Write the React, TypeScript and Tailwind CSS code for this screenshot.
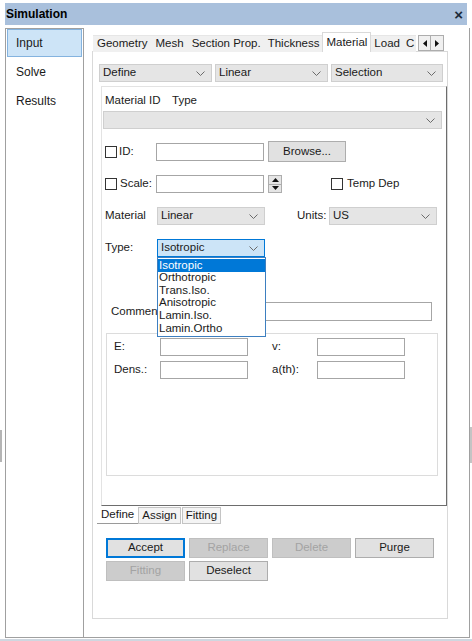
import React from "react";

const Chevron = () => (
  <svg width="9" height="5" viewBox="0 0 9 5" className="shrink-0">
    <path d="M0.5 0.5L4.5 4.5L8.5 0.5" fill="none" stroke="#6b6b6b" strokeWidth="1" />
  </svg>
);

const Tri = ({ dir }: { dir: "l" | "r" | "u" | "d" }) => {
  const d =
    dir === "l" ? "M4 0L0 3.5L4 7Z" : dir === "r" ? "M0 0L4 3.5L0 7Z" : dir === "u" ? "M0 4L3.5 0L7 4Z" : "M0 0L3.5 4L7 0Z";
  const horiz = dir === "l" || dir === "r";
  return (
    <svg width={horiz ? 4 : 7} height={horiz ? 7 : 4} viewBox={horiz ? "0 0 4 7" : "0 0 7 4"}>
      <path d={d} fill="#111111" />
    </svg>
  );
};

function Combo({ value, w, active }: { value?: string; w: string; active?: boolean }) {
  return (
    <div
      className={`flex h-[18px] shrink-0 items-center justify-between border pl-[3px] pr-[6px] ${w} ${
        active ? "border-[#0078d7] bg-[#cce4f7]" : "border-[#cfcfcf] bg-[#e5e5e5]"
      }`}
    >
      <span>{value}</span>
      <Chevron />
    </div>
  );
}

const Field = ({ w }: { w: string }) => (
  <div className={`h-[18px] shrink-0 border border-[#a6a6a6] bg-white ${w}`} />
);

const Check = () => <span className="h-[12px] w-[12px] shrink-0 border border-[#333333] bg-white" />;

function Btn({ label, disabled, focused }: { label: string; disabled?: boolean; focused?: boolean }) {
  return (
    <div
      className={`flex h-[20px] w-[79px] items-center justify-center ${
        disabled
          ? "border border-[#bfbfbf] bg-[#cccccc] text-[#a3a3a3]"
          : focused
          ? "border-2 border-[#0078d7] bg-[#e1e1e1]"
          : "border border-[#adadad] bg-[#e1e1e1]"
      }`}
    >
      {label}
    </div>
  );
}

const TABS = ["Geometry", "Mesh", "Section Prop.", "Thickness", "Material", "Load", "C"];
const TYPES = ["Isotropic", "Orthotropic", "Trans.Iso.", "Anisotropic", "Lamin.Iso.", "Lamin.Ortho"];

export default function App() {
  return (
    <div className="relative h-[641px] w-[472px] overflow-hidden bg-white pt-[3px] font-['Liberation_Sans',Arial,sans-serif] text-[11.5px] text-[#1a1a1a]">
      {/* title bar */}
      <div className="mx-[5px] flex h-[22px] items-center justify-between bg-[#a9c0dc] pl-[1px] pr-[4px]">
        <span className="text-[12px] font-bold text-black">Simulation</span>
        <span className="text-[15px] font-bold leading-none text-[#1a2a3a]">×</span>
      </div>

      <div className="mx-[5px] mt-[3px] flex h-[610px]">
        {/* left nav */}
        <div className="flex w-[79px] shrink-0 flex-col border border-[#a0a0a0] text-[12px]">
          <div className="mx-[1px] flex h-[28px] items-center border border-[#84b3df] bg-[#cde4f7] pl-[8px]">Input</div>
          <div className="flex h-[30px] items-center pl-[10px]">Solve</div>
          <div className="flex h-[28px] items-center pl-[10px]">Results</div>
        </div>

        {/* right area */}
        <div className="flex flex-1 flex-col border-b border-r border-[#a0a0a0] pb-[18px] pl-[8px] pr-[21px] pt-[5px]">
          {/* top tabs */}
          <div className="relative z-10 flex h-[19px] w-[356px] items-end">
            <div className="flex h-[20px] min-w-0 flex-1 items-end overflow-hidden pl-[1px]">
              {TABS.map((t) =>
                t === "Material" ? (
                  <div
                    key={t}
                    className="flex h-[20px] shrink-0 items-center whitespace-nowrap border border-b-0 border-[#d9d9d9] bg-white px-[3px]"
                  >
                    {t}
                  </div>
                ) : (
                  <div
                    key={t}
                    className={`flex h-[17px] shrink-0 items-center whitespace-nowrap border-t border-[#e6e6e6] bg-[#f0f0f0] ${
                      t === "C" ? "pl-[3px] pr-[2px]" : t === "Thickness" || t === "Load" ? "px-[3px]" : "px-[4px]"
                    }`}
                  >
                    {t}
                  </div>
                )
              )}
            </div>
            <div className="mb-[1px] mr-[4px] flex h-[16px] shrink-0">
              <div className="flex w-[13px] items-center justify-center border border-[#adadad] bg-[#f0f0f0]">
                <Tri dir="l" />
              </div>
              <div className="flex w-[13px] items-center justify-center border border-l-0 border-[#adadad] bg-[#f0f0f0]">
                <Tri dir="r" />
              </div>
            </div>
          </div>

          {/* tab page */}
          <div className="-mt-px flex w-[356px] flex-1 flex-col border border-[#d9d9d9] bg-white pt-[12px]">
            <div className="ml-[6px] flex gap-[3px]">
              <Combo value="Define" w="w-[113px]" />
              <Combo value="Linear" w="w-[113px]" />
              <Combo value="Selection" w="w-[112px]" />
            </div>

            {/* material frame */}
            <div className="relative ml-[8px] mt-[4px] flex h-[420px] flex-col border border-b-[#6d6d6d] border-l-[#e3e3e3] border-r-[#6d6d6d] border-t-[#e3e3e3] pl-[3px]">
              <div className="mt-[7px] flex h-[14px] items-center">
                <span className="w-[67px]">Material ID</span>
                <span>Type</span>
              </div>
              <div className="-ml-[3px] mt-[3px] pl-px">
                <Combo w="w-[339px]" />
              </div>

              <div className="mt-[12px] flex h-[21px] items-center">
                <div className="flex w-[51px] items-center gap-[2px]">
                  <Check />
                  <span>ID:</span>
                </div>
                <Field w="w-[108px]" />
                <div className="ml-[4px] flex h-[21px] w-[78px] items-center justify-center border border-[#adadad] bg-[#e1e1e1]">
                  Browse...
                </div>
              </div>

              <div className="mt-[13px] flex h-[18px] items-center">
                <div className="flex w-[51px] items-center gap-[3px]">
                  <Check />
                  <span>Scale:</span>
                </div>
                <Field w="w-[108px]" />
                <div className="ml-[4px] flex h-[18px] w-[14px] flex-col border border-[#adadad] bg-[#e5e5e5]">
                  <div className="flex flex-1 items-center justify-center border-b border-[#adadad]">
                    <Tri dir="u" />
                  </div>
                  <div className="flex flex-1 items-center justify-center">
                    <Tri dir="d" />
                  </div>
                </div>
                <div className="ml-[49px] flex items-center gap-[4px]">
                  <Check />
                  <span>Temp Dep</span>
                </div>
              </div>

              <div className="mt-[14px] flex h-[18px] items-center">
                <span className="w-[52px]">Material</span>
                <Combo value="Linear" w="w-[108px]" />
                <span className="ml-[32px] w-[32px]">Units:</span>
                <Combo value="US" w="w-[108px]" />
              </div>

              <div className="mt-[14px] flex h-[18px] items-center">
                <span className="w-[52px]">Type:</span>
                <Combo value="Isotropic" w="w-[108px]" active />
              </div>

              <div className="mt-[45px] flex h-[19px] items-center">
                <span className="ml-[6px] w-[59px]">Comment</span>
                <div className="h-[19px] w-[262px] border border-[#a6a6a6] bg-white" />
              </div>

              {/* properties box */}
              <div className="ml-px mt-[12px] flex h-[143px] w-[332px] flex-col border border-[#dcdcdc] pl-[7px] pt-[4px]">
                <div className="flex h-[18px] items-center">
                  <span className="w-[46px]">E:</span>
                  <Field w="w-[88px]" />
                  <span className="ml-[24px] w-[45px]">v:</span>
                  <Field w="w-[88px]" />
                </div>
                <div className="mt-[5px] flex h-[18px] items-center">
                  <span className="w-[46px]">Dens.:</span>
                  <Field w="w-[88px]" />
                  <span className="ml-[24px] w-[45px]">a(th):</span>
                  <Field w="w-[88px]" />
                </div>
              </div>

              {/* open type list */}
              <div className="absolute left-[55px] top-[170px] z-20 flex w-[109px] flex-col border border-[#3d7fc0] bg-white py-px text-[11.5px]">
                {TYPES.map((t, i) => (
                  <div
                    key={t}
                    className={`flex h-[12.6px] items-center pl-[1px] ${i === 0 ? "bg-[#0078d7] text-white" : ""}`}
                  >
                    {t}
                  </div>
                ))}
              </div>
            </div>

            {/* bottom tabs */}
            <div className="ml-[4px] mt-[1px] flex h-[17px]">
              <div className="flex items-center border-b border-[#9a9a9a] bg-white px-[4px]">Define</div>
              <div className="flex items-center border border-[#c4c4c4] bg-[#f4f4f4] px-[3px]">Assign</div>
              <div className="ml-px flex items-center border border-[#c4c4c4] bg-[#f4f4f4] px-[3px]">Fitting</div>
            </div>

            <div className="ml-[13px] mt-[14px] flex gap-[4px]">
              <Btn label="Accept" focused />
              <Btn label="Replace" disabled />
              <Btn label="Delete" disabled />
              <Btn label="Purge" />
            </div>
            <div className="ml-[13px] mt-[3px] flex gap-[4px]">
              <Btn label="Fitting" disabled />
              <Btn label="Deselect" />
            </div>
          </div>
        </div>
      </div>

      <div className="mt-px h-[3px] bg-[#cfd7e0]" />

      {/* sash grips at window edges */}
      <div className="absolute left-0 top-[430px] h-[32px] w-[2px] bg-[#b5b5b5]" />
      <div className="absolute right-0 top-[427px] h-[36px] w-[2px] bg-[#c4c4c4]" />
    </div>
  );
}
